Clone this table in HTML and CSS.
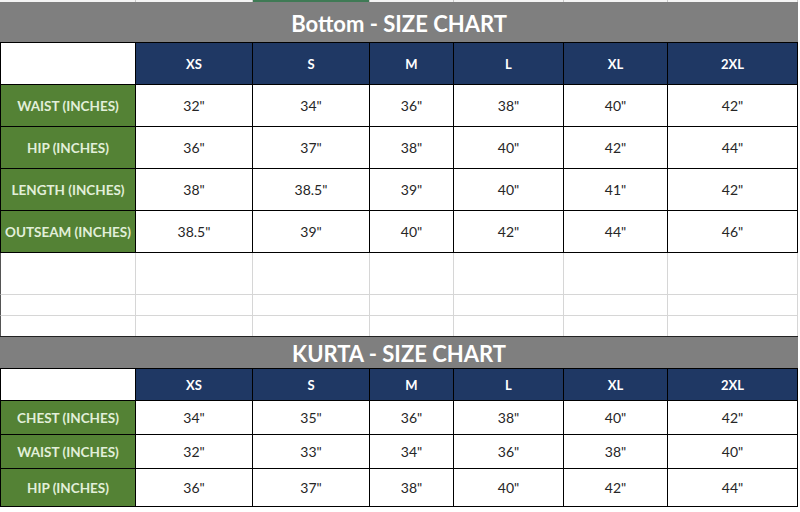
FILE: index.html
```html
<!DOCTYPE html>
<html lang="en">
<head>
<meta charset="utf-8">
<title>Size Chart</title>
<link rel="stylesheet" href="styles.css">
</head>
<body>
<div class="sheet">
  <div class="strip"></div><div class="strip"></div><div class="strip sel"></div><div class="strip"></div><div class="strip"></div><div class="strip"></div><div class="strip"></div>

  <div class="title t1">Bottom - SIZE CHART</div>
  <div class="corner"></div><div class="hd">XS</div><div class="hd">S</div><div class="hd">M</div><div class="hd">L</div><div class="hd">XL</div><div class="hd">2XL</div>
  <div class="lbl">WAIST (INCHES)</div><div class="c">32"</div><div class="c">34"</div><div class="c">36"</div><div class="c">38"</div><div class="c">40"</div><div class="c">42"</div>
  <div class="lbl">HIP (INCHES)</div><div class="c">36"</div><div class="c">37"</div><div class="c">38"</div><div class="c">40"</div><div class="c">42"</div><div class="c">44"</div>
  <div class="lbl">LENGTH (INCHES)</div><div class="c">38"</div><div class="c">38.5"</div><div class="c">39"</div><div class="c">40"</div><div class="c">41"</div><div class="c">42"</div>
  <div class="lbl">OUTSEAM (INCHES)</div><div class="c">38.5"</div><div class="c">39"</div><div class="c">40"</div><div class="c">42"</div><div class="c">44"</div><div class="c">46"</div>

  <div class="e first"></div><div class="e"></div><div class="e"></div><div class="e"></div><div class="e"></div><div class="e"></div><div class="e"></div>
  <div class="e first"></div><div class="e"></div><div class="e"></div><div class="e"></div><div class="e"></div><div class="e"></div><div class="e"></div>
  <div class="e first last"></div><div class="e last"></div><div class="e last"></div><div class="e last"></div><div class="e last"></div><div class="e last"></div><div class="e last"></div>

  <div class="title t2">KURTA - SIZE CHART</div>
  <div class="corner"></div><div class="hd">XS</div><div class="hd">S</div><div class="hd">M</div><div class="hd">L</div><div class="hd">XL</div><div class="hd">2XL</div>
  <div class="lbl">CHEST (INCHES)</div><div class="c">34"</div><div class="c">35"</div><div class="c">36"</div><div class="c">38"</div><div class="c">40"</div><div class="c">42"</div>
  <div class="lbl">WAIST (INCHES)</div><div class="c">32"</div><div class="c">33"</div><div class="c">34"</div><div class="c">36"</div><div class="c">38"</div><div class="c">40"</div>
  <div class="lbl">HIP (INCHES)</div><div class="c">36"</div><div class="c">37"</div><div class="c">38"</div><div class="c">40"</div><div class="c">42"</div><div class="c">44"</div>
</div>
</body>
</html>
```
FILE: styles.css
```css
* { box-sizing: border-box; }
html, body { margin: 0; padding: 0; background: #ffffff; }
body { width: 800px; height: 512px; overflow: hidden; font-family: Lato, "Open Sans", sans-serif; }

.sheet {
  display: grid;
  grid-template-columns: 136px 117px 117px 84px 110px 104px 130px;
  grid-template-rows: 2px 41px 42px 42px 42px 42px 42px 42px 21px 20px 33px 32px 34px 34px 38px;
  width: 798px;
}

.strip { background: #f4f4f4; border-right: 1px solid #c8c8c8; }
.sel { background: #3f7a55; }

.title {
  grid-column: 1 / -1;
  background: #7f7f7f;
  color: #ffffff;
  font-weight: 700;
  display: flex;
  align-items: center;
  justify-content: center;
  border-bottom: 1px solid #000;
}
.t1 { font-size: 22px; padding-top: 2px; }
.t2 { font-size: 22px; border-top: 1px solid #222; padding-top: 1px; }

.corner, .hd, .lbl, .c {
  border-right: 1px solid #000;
  border-bottom: 1px solid #000;
  display: flex;
  align-items: center;
  justify-content: center;
}
.corner { background: #ffffff; border-left: 1px solid #000; }
.hd { background: #1f3864; color: #ffffff; font-weight: 700; font-size: 13px; }
.lbl { background: #548235; color: #e2efda; font-weight: 700; font-size: 13.5px; border-left: 1px solid #000; white-space: nowrap; }
.c { background: #ffffff; color: #262626; font-size: 14px; }

.e { background: #ffffff; border-right: 1px solid #d6d6d6; border-bottom: 1px solid #d6d6d6; }
.e.first { border-left: 1px solid #555; }
.e.last { border-bottom: none; }
```
